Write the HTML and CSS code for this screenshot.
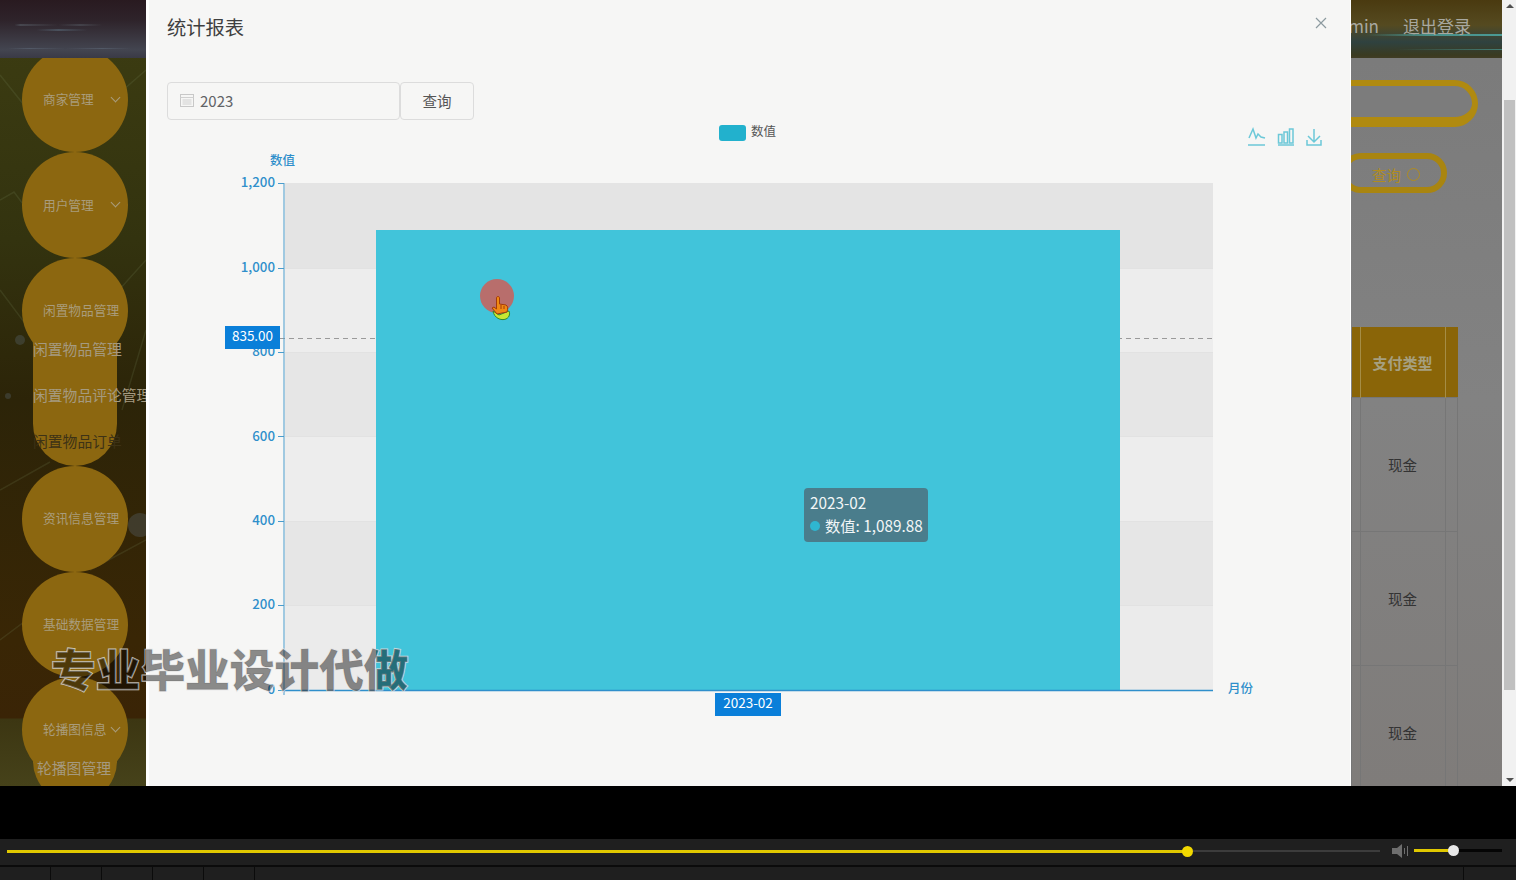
FILE: index.html
```html
<!DOCTYPE html>
<html lang="zh-CN">
<head>
    <meta charset="UTF-8">
    <meta name="viewport" content="width=device-width, initial-scale=1.0">
    <title>统计报表</title>
    <link rel="stylesheet" href="styles.css">
</head>
<body>
    <div class="video">
        <aside class="sidebar">
            <div class="top-strip top-strip-left"></div>
            <svg class="sidebar-lines" width="146" height="728" viewBox="0 58 146 728">
                <g fill="none" stroke="#7c8a5c" stroke-opacity="0.18" stroke-width="1.5">
                    <path d="M0 75 L60 150 M146 70 L100 110 M0 200 L14 192 L50 240 M146 260 L110 300 M0 290 L30 330 L52 420"/>
                    <path d="M146 330 L122 410 M0 490 L50 462 M146 540 L90 570 M0 640 L40 610"/>
                </g>
                <g fill="#5f7080" fill-opacity="0.3">
                    <circle cx="20" cy="340" r="5"/>
                    <circle cx="8" cy="396" r="3"/>
                    <circle cx="140" cy="525" r="12"/>
                </g>
            </svg>
            <nav class="menu">
                <div class="menu-circle"><span>商家管理</span><i class="chevron"></i></div>
                <div class="menu-circle"><span>用户管理</span><i class="chevron"></i></div>
                <div class="menu-circle"><span>闲置物品管理</span></div>
                <div class="submenu">
                    <div class="submenu-item">闲置物品管理</div>
                    <div class="submenu-item">闲置物品评论管理</div>
                    <div class="submenu-item submenu-dark">闲置物品订单</div>
                </div>
                <div class="menu-circle"><span>资讯信息管理</span></div>
                <div class="menu-circle"><span>基础数据管理</span></div>
                <div class="menu-circle"><span>轮播图信息</span><i class="chevron"></i></div>
                <div class="submenu submenu-last">
                    <div class="submenu-item">轮播图管理</div>
                </div>
            </nav>
        </aside>

        <main class="modal">
            <div class="modal-title">统计报表</div>
            <svg class="modal-close" width="12" height="12" viewBox="0 0 12 12">
                <path d="M1 1 L11 11 M11 1 L1 11" stroke="#8c9a9f" stroke-width="1.2" fill="none"/>
            </svg>
            <div class="query-row">
                <div class="year-input">
                    <svg width="14" height="13" viewBox="0 0 14 13">
                        <rect x="0.5" y="0.5" width="13" height="12" fill="none" stroke="#c8c8c8"/>
                        <path d="M0.5 3.5 H13.5 M2.5 6 H11.5 M2.5 8 H11.5 M2.5 10 H11.5" stroke="#d0d0d0" fill="none"/>
                    </svg>
                    <span>2023</span>
                </div>
                <button type="button" class="query-btn">查询</button>
            </div>

            <svg class="chart" width="1205" height="666" viewBox="146 120 1205 666">
                <!-- legend -->
                <rect x="719" y="125" width="27" height="16" rx="3" fill="#22b1cd"/>
                <text class="legend-text" x="751" y="136">数值</text>

                <!-- toolbox -->
                <g class="toolbox">
                    <path d="M1248 145 H1265 M1249 138 L1253 129 L1256 138 L1258 134 L1261 137 L1265 138"/>
                    <path d="M1278 145 H1294 M1278.5 134.5 H1282 V143 H1278.5 Z M1284 132 H1287.5 V143 H1284 Z M1289.5 129 H1293 V143 H1289.5 Z"/>
                    <path d="M1314 129 V142 M1308 136 L1314 142 L1320 136 M1307 140 V145 H1321 V140"/>
                </g>

                <!-- split areas -->
                <rect x="285" y="183" width="928" height="85" fill="#e4e4e4"/>
                <rect x="285" y="268" width="928" height="84" fill="#ededed"/>
                <rect x="285" y="352" width="928" height="84" fill="#e6e6e6"/>
                <rect x="285" y="436" width="928" height="85" fill="#ededed"/>
                <rect x="285" y="521" width="928" height="84" fill="#e6e6e6"/>
                <rect x="285" y="605" width="928" height="85" fill="#ebebeb"/>
                <path d="M285 268.5 H1213 M285 352.5 H1213 M285 436.5 H1213 M285 521.5 H1213 M285 605.5 H1213" stroke="#e2e2e2"/>

                <!-- axis pointer below the bar -->
                <path d="M280 338.5 H1213" stroke="#9a9a9a" stroke-dasharray="5 4"/>

                <rect x="376" y="230" width="744" height="460" fill="#41c4da"/>

                <!-- axes -->
                <path d="M284 183 V695 M278 183.5 H284 M278 268.5 H284 M278 352.5 H284 M278 436.5 H284 M278 521.5 H284 M278 605.5 H284 M278 690.5 H284" stroke="#4a9ccc" fill="none"/>
                <path d="M284 690.5 H1213" stroke="#2f8fcb" stroke-width="1.5"/>

                <g class="axis-text">
                    <text x="275" y="187">1,200</text>
                    <text x="275" y="272">1,000</text>
                    <text x="275" y="356">800</text>
                    <text x="275" y="441">600</text>
                    <text x="275" y="525">400</text>
                    <text x="275" y="609">200</text>
                    <text x="275" y="694">0</text>
                </g>
                <text class="axis-name" x="270" y="165">数值</text>
                <text class="axis-name" x="1228" y="693">月份</text>

                <!-- pointer labels -->
                <rect x="225" y="326" width="55" height="23" fill="#0a7fd9"/>
                <text class="pointer-text" x="252.5" y="341">835.00</text>
                <rect x="715" y="693" width="66" height="23" fill="#0a7fd9"/>
                <text class="pointer-text" x="748" y="708">2023-02</text>
            </svg>

            <div class="chart-tooltip">
                <div>2023-02</div>
                <div class="tooltip-row"><i class="tooltip-dot"></i>数值: 1,089.88</div>
            </div>

            <svg class="cursor-mark" width="36" height="44" viewBox="0 0 36 44">
                <circle cx="18" cy="18" r="17" fill="#b86e6c"/>
                <path d="M14 33 C15 40 22 43 27 41 C31 39 31 35 30 33 L20 37 Z" fill="#c8e832" stroke="#2e8a2e" stroke-width="1"/>
                <path d="M17.5 20 C17.5 18 20.5 18 20.5 20 V26 L27 27 C29 28 29 31 28 34 L18 36 L13 30 L15 29 L17.5 31 Z" fill="#f08a14" stroke="#a33b0a" stroke-width="1"/>
                <path d="M22 27 V31 M25 28 V31" stroke="#a33b0a" stroke-width="1" fill="none"/>
            </svg>
        </main>

        <section class="backdrop">
            <div class="top-strip top-strip-right"><span class="user-name">admin</span><span class="logout">退出登录</span></div>
            <div class="search-bar"></div>
            <div class="search-btn"><span>查询</span><i class="search-icon"></i></div>
            <table class="data-table">
                <tr>
                    <th class="col-a"></th>
                    <th class="col-b">支付类型</th>
                    <th class="col-c"></th>
                </tr>
                <tr><td></td><td>现金</td><td></td></tr>
                <tr><td></td><td>现金</td><td></td></tr>
                <tr><td></td><td>现金</td><td></td></tr>
            </table>
        </section>

        <div class="scrollbar">
            <div class="scroll-arrow"><i class="arrow-up"></i></div>
            <div class="scroll-thumb"></div>
            <div class="scroll-arrow"><i class="arrow-down"></i></div>
        </div>

        <div class="watermark">专业毕业设计代做</div>
    </div>

    <div class="player">
        <div class="player-bar">
            <div class="seek">
                <div class="seek-played"><i class="knob knob-yellow"></i></div>
            </div>
            <svg class="volume-icon" width="17" height="14" viewBox="0 0 17 14">
                <path d="M0 4 H5 L10 0 V14 L5 10 H0 Z" fill="#6e6e6e"/>
                <path d="M12.5 4 V10 M15.5 2 V12" stroke="#6e6e6e" fill="none"/>
            </svg>
            <div class="volume">
                <div class="volume-level"><i class="knob knob-white"></i></div>
            </div>
        </div>
        <div class="player-cells">
            <div class="cell"></div>
            <div class="cell"></div>
            <div class="cell"></div>
            <div class="cell"></div>
            <div class="cell"></div>
            <div class="cell cell-grow"></div>
            <div class="cell cell-last"></div>
        </div>
    </div>
</body>
</html>
```

FILE: styles.css
```css
html, body {
    margin: 0;
    padding: 0;
    background-color: #000;
}
body {
    width: 1516px;
    height: 880px;
    overflow: hidden;
    font-family: "Noto Sans CJK SC", "Liberation Sans", sans-serif;
}
.video {
    position: relative;
    display: flex;
    width: 1516px;
    height: 786px;
    overflow: hidden;
}

/* left menu */
.sidebar {
    position: relative;
    flex: 0 0 146px;
    overflow: hidden;
    background: linear-gradient(180deg, #3d3d12 0, #33330f 240px, #2c2408 400px, #392605 640px, #3a2406 718px, #3c3612 719px, #46421a 786px);
}
.top-strip {
    position: relative;
    z-index: 2;
    height: 58px;
}
.top-strip-left {
    background:
        linear-gradient(90deg, transparent 10%, rgba(120, 140, 150, 0.3) 14%, transparent 40%, rgba(120, 140, 150, 0.25) 55%, transparent 70%) 0 24px / 100% 2px no-repeat,
        linear-gradient(90deg, transparent 25%, rgba(120, 160, 180, 0.3) 40%, transparent 60%) 0 29px / 100% 2px no-repeat,
        linear-gradient(90deg, transparent 5%, rgba(120, 140, 160, 0.3) 20%, transparent 45%, rgba(120, 140, 160, 0.3) 70%, transparent 90%) 0 48px / 100% 1px no-repeat,
        linear-gradient(180deg, #291a20 0, #2e232a 20px, #434550 50px, #3a3a46 58px);
}
.sidebar-lines {
    position: absolute;
    left: 0;
    top: 58px;
}
.menu {
    position: relative;
    display: flex;
    flex-direction: column;
    margin-top: -11px;
}
.menu-circle {
    display: flex;
    align-items: center;
    flex: 0 0 105.4px;
    box-sizing: border-box;
    width: 106px;
    height: 105.4px;
    margin-left: 22px;
    padding: 0 9px 2px 21px;
    border-radius: 50%;
    background-color: #8c6710;
    color: #a99c7c;
    font-size: 12.7px;
    white-space: nowrap;
}
.chevron {
    width: 6px;
    height: 6px;
    margin: -3px 0 0 auto;
    border-right: 1px solid #a99c7c;
    border-bottom: 1px solid #a99c7c;
    transform: rotate(45deg);
}
.submenu {
    flex: 0 0 140px;
    box-sizing: border-box;
    width: 84px;
    height: 140px;
    margin: -37px 0 0 33px;
    border-radius: 0 0 42px 42px;
    background-color: #8c6710;
    position: relative;
}
.submenu-last {
    flex: 0 0 60px;
    height: 60px;
    margin-top: -39px;
    padding-top: 2px;
}
.submenu-item {
    height: 46px;
    line-height: 46px;
    color: #a59a80;
    font-size: 14.8px;
    white-space: nowrap;
}
.submenu-last .submenu-item {
    margin-left: 4px;
}
.submenu-dark {
    color: #3d3216;
}

/* dialog */
.modal {
    position: relative;
    z-index: 3;
    flex: 0 0 1205px;
    box-sizing: border-box;
    width: 1205px;
    padding-left: 21px;
    border-left: 3px solid #fff;
    border-right: 1px solid #fff;
    background-color: #f6f6f5;
}
.modal-title {
    padding-top: 13px;
    height: 69px;
    margin-left: -3px;
    color: #3f3f3f;
    font-size: 19.3px;
    line-height: 28px;
}
.modal-close {
    position: absolute;
    left: 1166px;
    top: 17px;
}
.query-row {
    display: flex;
    margin-left: -3px;
}
.year-input {
    display: flex;
    align-items: center;
    gap: 6px;
    box-sizing: border-box;
    width: 233px;
    height: 38px;
    padding: 0 0 2px 12px;
    border: 1px solid #dcdcdc;
    border-radius: 4px;
    color: #606266;
    font-size: 15px;
}
.query-btn {
    width: 74px;
    height: 38px;
    padding: 0 0 2px;
    border: 1px solid #dcdcdc;
    border-radius: 4px;
    background-color: #f6f6f5;
    color: #555;
    font-family: inherit;
    font-size: 14.5px;
}
.chart {
    display: block;
    margin-left: -24px;
}
.legend-text {
    fill: #555;
    font-size: 12.5px;
}
.toolbox path {
    fill: none;
    stroke: #6cc8d8;
    stroke-width: 1.5;
}
.axis-text text {
    fill: #2f8fcb;
    font-size: 13.3px;
    font-weight: 500;
    text-anchor: end;
}
.axis-name {
    fill: #2f8fcb;
    font-size: 12.5px;
    font-weight: 500;
}
.pointer-text {
    fill: #fff;
    font-size: 13.5px;
    text-anchor: middle;
}
.chart-tooltip {
    position: absolute;
    left: 655px;
    top: 488px;
    box-sizing: border-box;
    width: 124px;
    height: 54px;
    padding: 3px 0 0 6px;
    border-radius: 4px;
    background-color: #4a7d8c;
    color: #f2f6f7;
    font-size: 15.3px;
    line-height: 23px;
    white-space: nowrap;
}
.tooltip-row {
    display: flex;
    align-items: center;
}
.tooltip-dot {
    width: 10px;
    height: 10px;
    margin-right: 5px;
    border-radius: 50%;
    background-color: #2fb6d0;
}
.cursor-mark {
    position: absolute;
    left: 330px;
    top: 278px;
}

/* page behind the dialog */
.backdrop {
    flex: 0 0 151px;
    overflow: hidden;
    background: linear-gradient(180deg, #7b7b7b 60px, #828282 400px, #7f7c7a 786px);
}
.top-strip-right {
    display: flex;
    justify-content: flex-end;
    align-items: center;
    height: 58px;
    padding: 0 31px 8px 0;
    box-sizing: border-box;
    background:
        linear-gradient(90deg, transparent 10%, rgba(80, 190, 190, 0.6) 50%, rgba(80, 190, 190, 0.7) 100%) 0 34px / 100% 2px no-repeat,
        linear-gradient(90deg, transparent 30%, rgba(80, 190, 190, 0.5) 100%) 0 49px / 100% 1px no-repeat,
        linear-gradient(180deg, #4a3a10 0, #554a20 25px, #2f4240 42px, #3a3a20 55px, #403c24 58px);
    color: #a8a8a0;
    font-size: 17px;
    white-space: nowrap;
}
.user-name {
    margin-right: 24px;
}
.search-bar {
    box-sizing: border-box;
    width: 300px;
    height: 47px;
    margin: 22px 0 0 -173px;
    border: 6px solid #b08a10;
    border-bottom-width: 10px;
    border-radius: 24px;
    background-color: #7c7c7c;
}
.search-btn {
    display: flex;
    align-items: center;
    justify-content: center;
    gap: 6px;
    box-sizing: border-box;
    width: 106px;
    height: 40px;
    margin: 26px 0 0 -10px;
    padding: 2px 0 0 4px;
    border: 6px solid #a98510;
    border-radius: 20px;
    color: #b08c20;
    font-size: 14.5px;
}
.search-icon {
    width: 11px;
    height: 11px;
    border: 1px solid #b08c20;
    border-radius: 50%;
}
.data-table {
    width: 107px;
    margin-top: 134px;
    border-collapse: collapse;
    table-layout: fixed;
}
.data-table th {
    height: 70px;
    padding: 0;
    background-color: #8a6508;
    border-left: 1px solid #a58d45;
    border-right: 1px solid #a58d45;
    color: #a6a080;
    font-size: 15px;
    white-space: nowrap;
}
.data-table th:first-child {
    border-left: 0;
}
.data-table th:last-child {
    border-right: 0;
}
.data-table td {
    height: 133px;
    padding: 0;
    border: 1px solid #767676;
    color: #333;
    font-size: 14.5px;
    text-align: center;
}
.col-a {
    width: 8px;
}
.col-b {
    width: 84px;
}
.col-c {
    width: 12px;
}

/* page scrollbar */
.scrollbar {
    display: flex;
    flex-direction: column;
    flex: 0 0 14px;
    box-sizing: border-box;
    padding: 0 1px 0 2px;
    background-color: #f1f1f1;
}
.scroll-arrow {
    display: flex;
    align-items: center;
    justify-content: center;
    height: 12px;
}
.arrow-up {
    border: 4px solid transparent;
    border-top: 0;
    border-bottom: 4px solid #505050;
}
.arrow-down {
    border: 4px solid transparent;
    border-bottom: 0;
    border-top: 4px solid #505050;
}
.scroll-thumb {
    flex: 0 0 590px;
    margin-top: 88px;
    margin-bottom: 84px;
    background-color: #c0c0c0;
}

.watermark {
    position: absolute;
    left: 51px;
    top: 636px;
    z-index: 4;
    color: rgba(0, 0, 0, 0.46);
    font-size: 44.7px;
    font-weight: 900;
    line-height: 64px;
    white-space: nowrap;
    paint-order: stroke fill;
    -webkit-text-stroke: 1.5px rgba(225, 225, 225, 0.8);
}

/* video player controls */
.player {
    margin-top: 53px;
    height: 41px;
    background-color: #1f1f1f;
}
.player-bar {
    display: flex;
    align-items: center;
    box-sizing: border-box;
    height: 28px;
    padding-bottom: 3px;
    border-bottom: 2px solid #0b0b0b;
}
.seek {
    width: 1373px;
    height: 2px;
    margin-left: 7px;
    background-color: #3c3c3c;
}
.seek-played {
    position: relative;
    width: 1181px;
    height: 3px;
    background-color: #e0c800;
}
.knob {
    position: absolute;
    top: -4px;
    right: -5px;
    width: 11px;
    height: 11px;
    border-radius: 50%;
}
.knob-yellow {
    background-color: #f2d900;
}
.knob-white {
    background-color: #e8e8e8;
}
.volume-icon {
    margin-left: 12px;
}
.volume {
    width: 88px;
    height: 3px;
    margin-left: 5px;
    background-color: #050505;
}
.volume-level {
    position: relative;
    width: 40px;
    height: 3px;
    background-color: #e0c800;
}
.player-cells {
    display: flex;
    height: 13px;
}
.cell {
    flex: 0 0 51px;
    box-sizing: border-box;
    border-right: 1px solid #0b0b0b;
}
.cell-grow {
    flex: 1 1 auto;
}
.cell-last {
    flex: 0 0 52px;
    border-right: 0;
}
```
